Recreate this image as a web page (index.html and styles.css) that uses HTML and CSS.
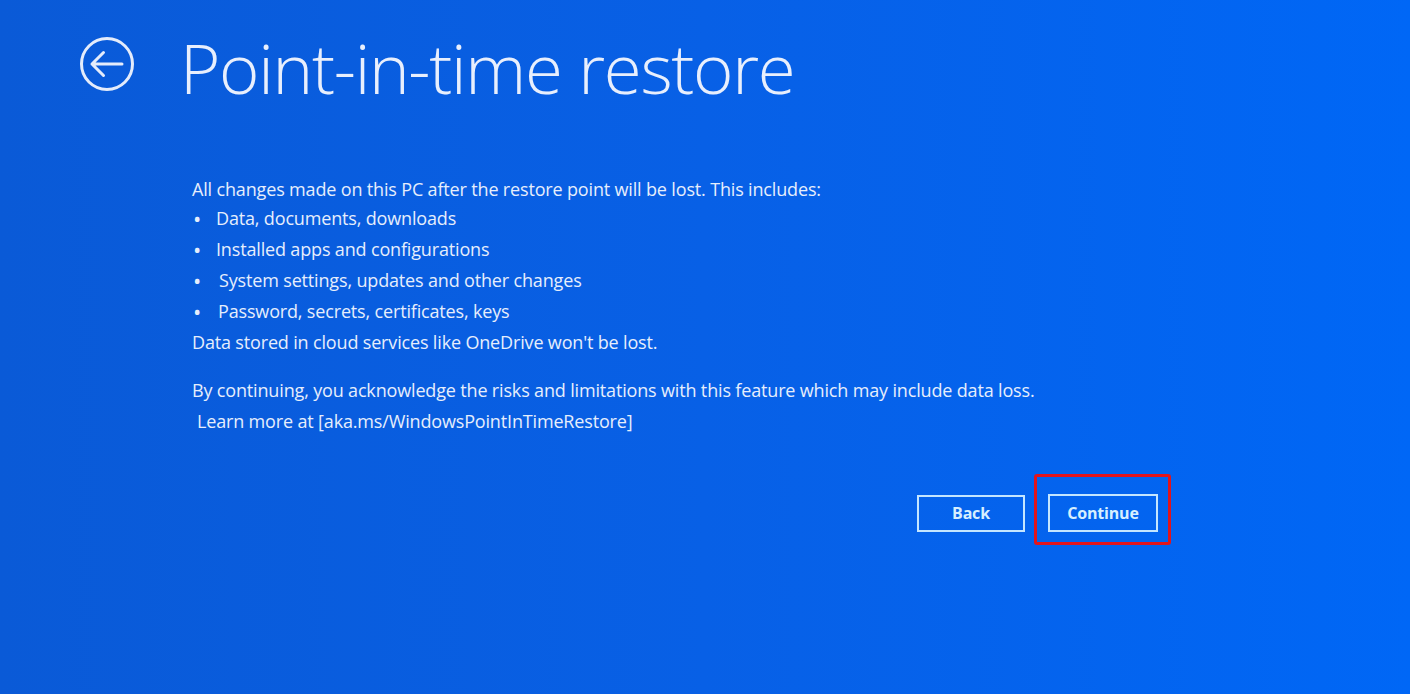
FILE: index.html
```html
<!DOCTYPE html>
<html lang="en">
<head>
<meta charset="utf-8">
<title>Point-in-time restore</title>
<link rel="stylesheet" href="styles.css">
</head>
<body>
<div class="screen">
  <header class="header">
    <svg class="back-icon" width="56" height="56" viewBox="0 0 56 56" aria-hidden="true">
      <circle cx="28" cy="28" r="25.5" fill="none" stroke="#e4ecfb" stroke-width="3"/>
      <path d="M13 28 H43 M24.5 16.5 L13 28 L24.5 39.5" fill="none" stroke="#e4ecfb" stroke-width="3" stroke-linecap="round" stroke-linejoin="round"/>
    </svg>
    <h1 class="title">Point-in-time restore</h1>
  </header>

  <main class="content">
    <p class="line intro">All changes made on this PC after the restore point will be lost. This includes:</p>
    <ul class="list">
      <li><span class="bullet">•</span><span>Data, documents, downloads</span></li>
      <li><span class="bullet">•</span><span>Installed apps and configurations</span></li>
      <li><span class="bullet">•</span><span class="shift">System settings, updates and other changes</span></li>
      <li><span class="bullet">•</span><span class="shift-sm">Password, secrets, certificates, keys</span></li>
    </ul>
    <p class="line">Data stored in cloud services like OneDrive won't be lost.</p>

    <p class="line para">By continuing, you acknowledge the risks and limitations with this feature which may include data loss.</p>
    <p class="line indent">Learn more at [aka.ms/WindowsPointInTimeRestore]</p>

    <div class="actions">
      <button class="btn btn-back" type="button">Back</button>
      <span class="highlight">
        <button class="btn btn-continue" type="button">Continue</button>
      </span>
    </div>
  </main>
</div>
</body>
</html>
```

FILE: styles.css
```css
html, body {
  margin: 0;
  padding: 0;
  height: 100%;
}

body {
  background: linear-gradient(90deg, #0a5ad7 0%, #0860e6 50%, #0067f6 100%);
  color: #e6eefc;
  font-family: "Open Sans", "Noto Sans", "DejaVu Sans", sans-serif;
  overflow: hidden;
}

.screen {
  width: 1410px;
  height: 694px;
}

.header {
  display: flex;
  align-items: center;
  padding: 36px 0 0 79px;
  height: 56px;
}

.back-icon {
  flex: none;
  display: block;
}

.title {
  margin: 0 0 0 45px;
  font-size: 69px;
  font-weight: 300;
  line-height: 56px;
  color: #e8effd;
  letter-spacing: -1.3px;
  white-space: nowrap;
  position: relative;
  top: 3px;
}

.content {
  margin: 82px 0 0 192px;
  width: 979px;
  font-size: 18px;
  line-height: 31px;
  letter-spacing: -0.16px;
}

.line {
  margin: 0;
  white-space: nowrap;
}

.intro {
  margin-bottom: -2px;
}

.list {
  list-style: none;
  margin: 0;
  padding: 0;
}

.list li {
  display: flex;
  white-space: nowrap;
}

.bullet {
  width: 24px;
  padding-left: 1px;
  box-sizing: border-box;
  font-size: 22px;
}

.shift { padding-left: 3px; }
.shift-sm { padding-left: 2px; }

.para {
  margin-top: 17px;
}

.indent {
  padding-left: 5px;
}

.actions {
  display: flex;
  justify-content: flex-end;
  align-items: flex-end;
  gap: 9px;
  margin-top: 37px;
}

.btn {
  font-family: "Open Sans", "Noto Sans", sans-serif;
  font-size: 16px;
  font-weight: 700;
  color: #d6efff;
  background: transparent;
  border: 2px solid #c4e6ff;
  padding: 0;
  height: 37px;
  line-height: 33px;
  letter-spacing: -0.2px;
  cursor: pointer;
}

.btn-back {
  width: 108px;
  margin-bottom: 13px;
}

.btn-continue {
  width: 110px;
  height: 38px;
  display: block;
}

.highlight {
  display: block;
  border: 3px solid #e3141c;
  border-radius: 3px;
  padding: 17px 10px 10px 11px;
}
```
